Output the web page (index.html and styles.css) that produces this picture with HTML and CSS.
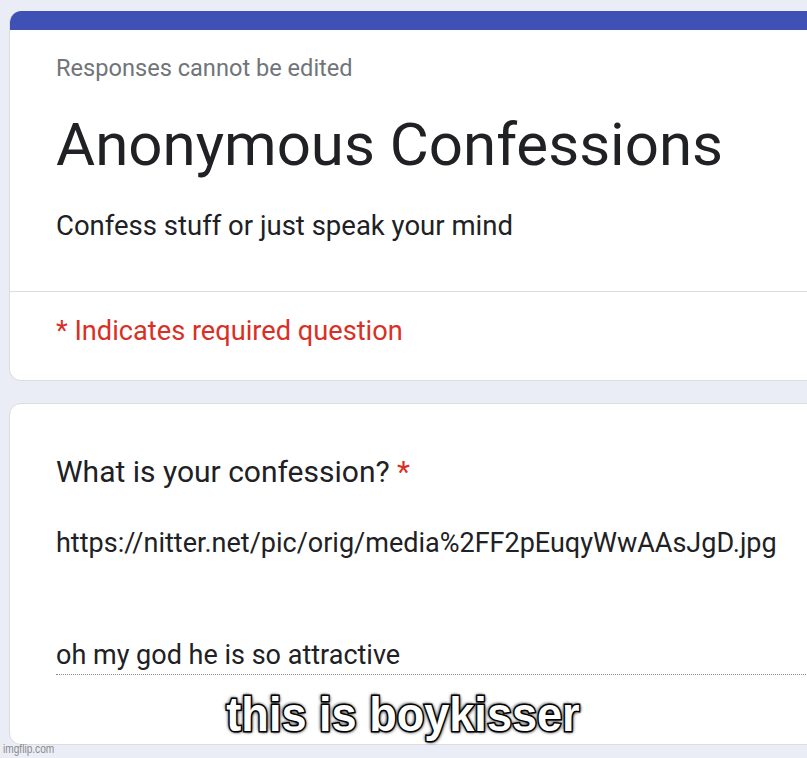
FILE: index.html
```html
<!DOCTYPE html>
<html>
<head>
<meta charset="utf-8">
<link rel="stylesheet" href="styles.css">
</head>
<body>
<div class="page">
  <section class="card head-card">
    <div class="bar"></div>
    <div class="head">
      <div class="note">Responses cannot be edited</div>
      <h1 class="title">Anonymous Confessions</h1>
      <div class="desc">Confess stuff or just speak your mind</div>
    </div>
    <div class="req">* Indicates required question</div>
  </section>
  <section class="card q-card">
    <div class="question">What is your confession? <span class="star">*</span></div>
    <div class="answer">
      <div class="line url">https://nitter.net/pic/orig/media%2FF2pEuqyWwAAsJgD.jpg</div>
      <div class="line last">oh my god he is so attractive</div>
    </div>
  </section>
</div>
<div class="meme"><span class="meme-text">this is boykisser</span></div>
<div class="mark">imgflip.com</div>
</body>
</html>
```
FILE: styles.css
```css
html, body {
  margin: 0;
  padding: 0;
}
body {
  width: 807px;
  height: 758px;
  overflow: hidden;
  background: #ebedf6;
  font-family: Roboto, "Liberation Sans", sans-serif;
  color: #202124;
  position: relative;
}
.page {
  padding: 11px 0 0 9px;
  width: 830px;
  display: flex;
  flex-direction: column;
  gap: 22px;
}
.card {
  background: #fff;
  border: 1px solid #dadce0;
  border-radius: 12px;
  overflow: hidden;
}
.head-card {
  border-top: none;
}
.bar {
  height: 19px;
  background: #3f51b5;
}
.head {
  padding: 24px 0 49px 46px;
  border-bottom: 1px solid #dadce0;
}
.note {
  font-size: 23.6px;
  line-height: 28px;
  color: #70757a;
}
.title {
  margin: 27px 0 0;
  font-weight: 400;
  font-size: 60px;
  line-height: 72px;
  color: #202124;
  letter-spacing: 0;
}
.desc {
  margin-top: 29px;
  font-size: 27.5px;
  line-height: 32px;
}
.req {
  padding: 23px 0 33px 46px;
  font-size: 27.2px;
  line-height: 32px;
  color: #d93025;
}
.q-card {
  padding: 51px 0 69px 46px;
}
.question {
  font-size: 30px;
  line-height: 34px;
}
.star {
  color: #d93025;
}
.answer {
  margin-top: 38px;
  border-bottom: 1px dotted #8a8a8a;
  padding-bottom: 3px;
}
.line {
  font-size: 27px;
  line-height: 32px;
}
.last {
  margin-top: 80px;
}
.meme {
  position: absolute;
  left: 0;
  right: 0;
  top: 684px;
  text-align: center;
}
.meme-text {
  display: inline-block;
  font-family: "Liberation Sans", Arial, sans-serif;
  font-weight: 700;
  font-size: 49px;
  line-height: 60px;
  color: #fff;
  transform: scaleX(0.92);
  -webkit-text-stroke: 3px #000;
  paint-order: stroke fill;
  text-shadow: 0 0 3px #000, 1px 1px 4px #000, -1px -1px 4px #000;
}
.mark {
  position: absolute;
  left: 3px;
  top: 741px;
  font-family: "Liberation Sans", Arial, sans-serif;
  font-size: 13px;
  line-height: 16px;
  color: #8a8a8a;
  transform: scaleX(0.78);
  transform-origin: left center;
}
```
